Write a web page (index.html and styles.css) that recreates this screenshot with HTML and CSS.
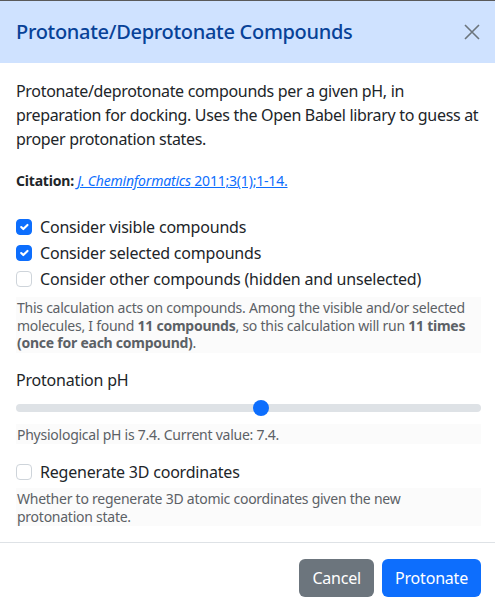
FILE: index.html
```html
<!DOCTYPE html>
<html lang="en">
<head>
  <meta charset="UTF-8">
  <meta name="viewport" content="width=device-width, initial-scale=1.0">
  <title>Protonate/Deprotonate Compounds</title>
  <link rel="stylesheet" href="styles.css">
</head>
<body>
  <div class="modal">
    <div class="modal-header">
      <h5 class="modal-title">Protonate/Deprotonate Compounds</h5>
      <button class="btn-close" aria-label="Close">
        <svg width="16" height="16" viewBox="0 0 16 16">
          <path d="M1 1 L15 15 M15 1 L1 15" stroke="#6c757d" stroke-width="1.6" fill="none"/>
        </svg>
      </button>
    </div>

    <div class="modal-body">
      <p class="intro">Protonate/deprotonate compounds per a given pH, in preparation for docking. Uses the Open Babel library to guess at proper protonation states.</p>
      <p class="citation"><b>Citation:</b> <a href="#"><i>J. Cheminformatics</i> 2011;3(1);1-14.</a></p>

      <div class="checks">
        <label class="form-check">
          <input type="checkbox" checked>
          <span>Consider visible compounds</span>
        </label>
        <label class="form-check">
          <input type="checkbox" checked>
          <span>Consider selected compounds</span>
        </label>
        <label class="form-check">
          <input type="checkbox">
          <span>Consider other compounds (hidden and unselected)</span>
        </label>
      </div>
      <div class="form-text">This calculation acts on compounds. Among the visible and/or selected molecules, I found <b>11 compounds</b>, so this calculation will run <b>11 times (once for each compound)</b>.</div>

      <div class="field">
        <label class="form-label" for="phRange">Protonation pH</label>
        <input type="range" id="phRange" class="form-range" min="0" max="14" step="0.1" value="7.4">
        <div class="form-text">Physiological pH is 7.4. Current value: <span id="phValue">7.4</span>.</div>
      </div>

      <label class="form-check">
        <input type="checkbox">
        <span>Regenerate 3D coordinates</span>
      </label>
      <div class="form-text">Whether to regenerate 3D atomic coordinates given the new protonation state.</div>
    </div>

    <div class="modal-footer">
      <button class="btn btn-secondary">Cancel</button>
      <button class="btn btn-primary">Protonate</button>
    </div>
  </div>

  <script>
    const phRange = document.getElementById('phRange');
    const phValue = document.getElementById('phValue');

    // Keep the help text in step with the slider
    phRange.addEventListener('input', () => {
      phValue.textContent = phRange.value;
    });
  </script>
</body>
</html>
```

FILE: styles.css
```css
html, body {
  margin: 0;
  padding: 0;
  overflow: hidden;
}

body {
  font-family: "Noto Sans", "Open Sans", sans-serif;
  font-size: 16px;
  line-height: 1.5;
  letter-spacing: -0.2px;
  color: #212529;
  background: #fff;
}

.modal {
  width: 497px;
  border-top: 1px solid #5a5a5a;
}

.modal-header {
  display: flex;
  align-items: center;
  justify-content: space-between;
  padding: 16px;
  background-color: #cfe2ff;
}

.modal-title {
  margin: 0;
  font-size: 20px;
  font-weight: 500;
  line-height: 30px;
  letter-spacing: -0.3px;
  color: #084298;
}

.btn-close {
  border: 0;
  background: none;
  padding: 0;
  margin-right: 1px;
  width: 16px;
  height: 16px;
  cursor: pointer;
}

.modal-body {
  padding: 16px;
}

.intro {
  margin: 0 0 19px;
  letter-spacing: -0.32px;
}

.citation {
  margin: 0 0 24px;
  font-size: 14px;
  line-height: 21px;
}

.citation a {
  color: #0d6efd;
}

.checks {
  display: flex;
  flex-direction: column;
}

.form-check {
  display: flex;
  align-items: center;
  gap: 8px;
  min-height: 24px;
  margin-bottom: 2px;
}

.form-check input {
  appearance: none;
  width: 16px;
  height: 16px;
  margin: 0;
  border: 1px solid #ced4da;
  border-radius: 4px;
  background: #fff;
  flex-shrink: 0;
}

.form-check input:checked {
  background-color: #0d6efd;
  border-color: #0d6efd;
  background-image: url("data:image/svg+xml,%3csvg xmlns='http://www.w3.org/2000/svg' viewBox='0 0 20 20'%3e%3cpath fill='none' stroke='%23fff' stroke-linecap='round' stroke-linejoin='round' stroke-width='3' d='m6 10 3 3 6-6'/%3e%3c/svg%3e");
  background-size: 100% 100%;
}

.form-text {
  margin-top: 4px;
  padding: 2px 14px 1px 1px;
  font-size: 14px;
  line-height: 17.5px;
  letter-spacing: -0.25px;
  color: #5c6166;
  background: #fbfbfb;
}

.field {
  margin-top: 15px;
  margin-bottom: 16px;
}

.form-label {
  display: block;
  margin-bottom: 4px;
}

.form-range {
  appearance: none;
  display: block;
  width: 100%;
  height: 24px;
  margin: 0 0 3px;
  padding: 0;
  background: transparent;
}

.form-range::-webkit-slider-runnable-track {
  height: 8px;
  border-radius: 4px;
  background: #dee2e6;
}

.form-range::-webkit-slider-thumb {
  appearance: none;
  width: 16px;
  height: 16px;
  margin-top: -4px;
  border-radius: 50%;
  background: #0d6efd;
}

.modal-footer {
  display: flex;
  justify-content: flex-end;
  gap: 8px;
  padding: 16px 16px 14px;
  border-top: 1px solid #dee2e6;
}

.btn {
  font-family: inherit;
  font-size: 16px;
  line-height: 24px;
  letter-spacing: -0.2px;
  padding: 6px 12px;
  border: 1px solid transparent;
  border-radius: 6px;
  color: #fff;
  cursor: pointer;
}

.btn-secondary {
  background-color: #6c757d;
}

.btn-primary {
  background-color: #0d6efd;
}
```
